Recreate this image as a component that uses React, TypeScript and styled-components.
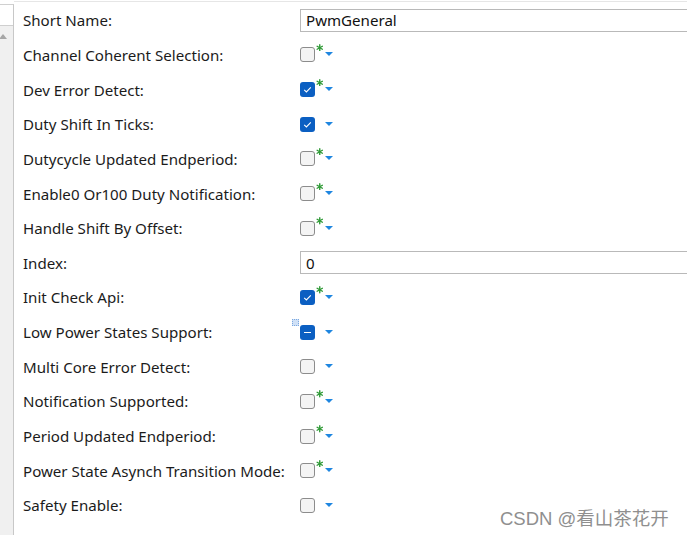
import React from 'react';
import styled, { createGlobalStyle } from 'styled-components';

type Field =
  | { label: string; kind: 'text'; value: string }
  | { label: string; kind: 'check'; state: 'off' | 'on' | 'mixed'; star?: boolean; link?: boolean };

const fields: Field[] = [
  { label: 'Short Name:', kind: 'text', value: 'PwmGeneral' },
  { label: 'Channel Coherent Selection:', kind: 'check', state: 'off', star: true },
  { label: 'Dev Error Detect:', kind: 'check', state: 'on', star: true },
  { label: 'Duty Shift In Ticks:', kind: 'check', state: 'on' },
  { label: 'Dutycycle Updated Endperiod:', kind: 'check', state: 'off', star: true },
  { label: 'Enable0 Or100 Duty Notification:', kind: 'check', state: 'off', star: true },
  { label: 'Handle Shift By Offset:', kind: 'check', state: 'off', star: true },
  { label: 'Index:', kind: 'text', value: '0' },
  { label: 'Init Check Api:', kind: 'check', state: 'on', star: true },
  { label: 'Low Power States Support:', kind: 'check', state: 'mixed', link: true },
  { label: 'Multi Core Error Detect:', kind: 'check', state: 'off' },
  { label: 'Notification Supported:', kind: 'check', state: 'off', star: true },
  { label: 'Period Updated Endperiod:', kind: 'check', state: 'off', star: true },
  { label: 'Power State Asynch Transition Mode:', kind: 'check', state: 'off', star: true },
  { label: 'Safety Enable:', kind: 'check', state: 'off' },
];

const Star = () => (
  <StarIcon viewBox="0 0 8 8">
    <g stroke="#2f9a36" strokeWidth="1.5" strokeLinecap="round">
      <line x1="4" y1="0.8" x2="4" y2="7.2" />
      <line x1="1.2" y1="2.4" x2="6.8" y2="5.6" />
      <line x1="1.2" y1="5.6" x2="6.8" y2="2.4" />
    </g>
  </StarIcon>
);

const CheckBox = ({ state }: { state: 'off' | 'on' | 'mixed' }) => (
  <Box $filled={state !== 'off'}>
    {state === 'on' && (
      <svg width="15" height="15" viewBox="0 0 15 15">
        <path d="M4.2 7.8 L6.4 9.9 L10.8 5.3" fill="none" stroke="#fff" strokeWidth="1.1" />
      </svg>
    )}
    {state === 'mixed' && <Dash />}
  </Box>
);

const App = () => (
  <>
    <GlobalStyle />
    <Page>
      <Side>
        <SideHead />
        <SideBody>
          <UpArrow />
        </SideBody>
      </Side>
      <Form>
        {fields.map((f) => (
          <Row key={f.label}>
            <Label>{f.label}</Label>
            {f.kind === 'text' ? (
              <TextBox>{f.value}</TextBox>
            ) : (
              <Control>
                {f.link && <LinkMark />}
                <CheckBox state={f.state} />
                <StarSlot>{f.star && <Star />}</StarSlot>
                <Caret />
              </Control>
            )}
          </Row>
        ))}
      </Form>
      <Watermark>CSDN @看山茶花开</Watermark>
    </Page>
  </>
);

const GlobalStyle = createGlobalStyle`
  html, body {
    margin: 0;
    padding: 0;
    background: #fff;
    overflow: hidden;
  }
  body {
    font-family: "Noto Sans", "Open Sans", sans-serif;
  }
`;

const Page = styled.div`
  position: relative;
  width: 687px;
  height: 535px;
  display: flex;
  overflow: hidden;
  background: #fff;
`;

const Side = styled.div`
  width: 13px;
  margin-top: 4px;
  border-top: 1px solid #d0d0d0;
  border-right: 1px solid #c8c8c8;
  display: flex;
  flex-direction: column;
`;

const SideHead = styled.div`
  height: 20px;
  background: #fff;
  border-bottom: 1px solid #cfcfcf;
`;

const SideBody = styled.div`
  flex: 1;
  background: #f0f0f0;
  padding-top: 8px;
`;

const UpArrow = styled.div`
  width: 0;
  height: 0;
  margin-left: -1px;
  border-left: 4px solid transparent;
  border-right: 4px solid transparent;
  border-bottom: 5px solid #a6a6a6;
`;

const Form = styled.div`
  flex: 1;
  margin-top: 1px;
  border-top: 1px solid #e6e6e6;
  padding: 1px 0 0 9px;
  display: flex;
  flex-direction: column;
  min-width: 0;
`;

const Row = styled.div`
  height: 34.65px;
  display: grid;
  grid-template-columns: 277px 1fr;
  align-items: center;
`;

const Label = styled.div`
  font-size: 15.1px;
  color: #1b1b1b;
  white-space: nowrap;
`;

const TextBox = styled.div`
  height: 21px;
  width: 420px;
  border: 1px solid #b9b9b9;
  padding-left: 5px;
  display: flex;
  align-items: center;
  font-size: 15.1px;
  color: #111;
`;

const Control = styled.div`
  position: relative;
  display: flex;
  align-items: center;
  height: 15px;
`;

const Box = styled.div<{ $filled: boolean }>`
  width: 15px;
  height: 15px;
  box-sizing: border-box;
  border-radius: 3px;
  border: ${(p) => (p.$filled ? 'none' : '1.5px solid #8c8c8c')};
  background: ${(p) => (p.$filled ? '#0b5fc2' : '#f4f4f4')};
  display: flex;
  align-items: center;
  justify-content: center;
`;

const Dash = styled.div`
  width: 7px;
  height: 1px;
  background: #fff;
`;

const StarSlot = styled.div`
  width: 10px;
  height: 15px;
  position: relative;
`;

const StarIcon = styled.svg`
  position: absolute;
  left: 0.5px;
  top: -3.5px;
  width: 7.5px;
  height: 7.5px;
`;

const Caret = styled.div`
  width: 0;
  height: 0;
  margin-top: -1px;
  border-left: 4px solid transparent;
  border-right: 4px solid transparent;
  border-top: 4px solid #1f86e0;
`;

const LinkMark = styled.div`
  position: absolute;
  left: -8px;
  top: -6px;
  width: 5px;
  height: 5px;
  border: 1px dotted #7aa8e0;
  background: #cfe0f6;
`;

const Watermark = styled.div`
  position: absolute;
  left: 500px;
  top: 504px;
  font-family: "Liberation Sans", "Noto Sans CJK SC", sans-serif;
  font-size: 18.5px;
  color: #8f8f8f;
  text-shadow: 0 0 2px #fff, 0 0 1px #fff;
  white-space: nowrap;
`;

export default App;
